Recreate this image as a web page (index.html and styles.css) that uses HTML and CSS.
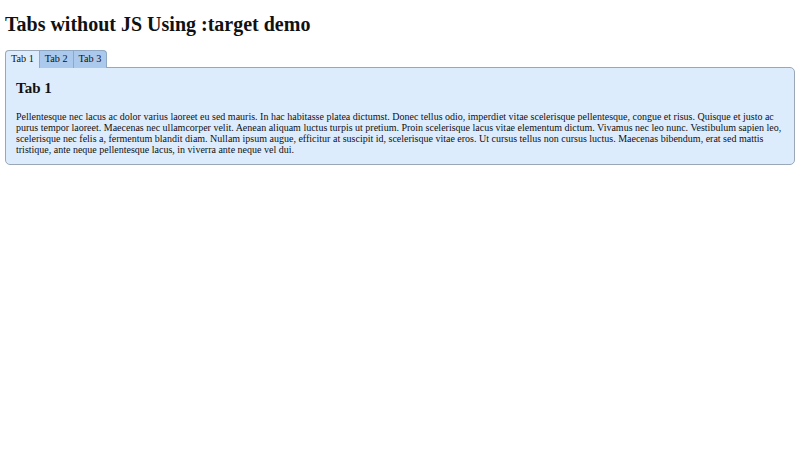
FILE: index.html
```html
<!DOCTYPE html>
<html>
<head>
<meta charset="utf-8">
<title>Tabs without JS</title>
<link rel="stylesheet" href="styles.css">
</head>
<body>
<h1 class="title">Tabs without JS Using :target demo</h1>
<div class="tabs">
  <div class="tab-list">
    <a class="tab active" href="#tab1">Tab 1</a>
    <a class="tab" href="#tab2">Tab 2</a>
    <a class="tab" href="#tab3">Tab 3</a>
  </div>
  <div class="panel">
    <h2 class="panel-title">Tab 1</h2>
    <p class="panel-text">Pellentesque nec lacus ac dolor varius laoreet eu sed mauris. In hac habitasse platea dictumst. Donec tellus odio, imperdiet vitae scelerisque pellentesque, congue et risus. Quisque et justo ac purus tempor laoreet. Maecenas nec ullamcorper velit. Aenean aliquam luctus turpis ut pretium. Proin scelerisque lacus vitae elementum dictum. Vivamus nec leo nunc. Vestibulum sapien leo, scelerisque nec felis a, fermentum blandit diam. Nullam ipsum augue, efficitur at suscipit id, scelerisque vitae eros. Ut cursus tellus non cursus luctus. Maecenas bibendum, erat sed mattis tristique, ante neque pellentesque lacus, in viverra ante neque vel dui.</p>
  </div>
</div>
</body>
</html>
```
FILE: styles.css
```css
html, body {
  margin: 0;
  padding: 0;
  background: #fff;
}
body {
  font-family: "Liberation Serif", "Times New Roman", serif;
  color: #111;
  padding: 11px 5px;
}
.title {
  margin: 0 0 12px 0;
  font-size: 20px;
  line-height: 27px;
  font-weight: bold;
}
.tabs {
  display: flex;
  flex-direction: column;
}
.tab-list {
  display: flex;
  position: relative;
  z-index: 1;
  margin-bottom: -1px;
}
.tab {
  display: block;
  font-size: 10.2px;
  line-height: 16px;
  padding: 0 5px;
  color: #111;
  text-decoration: none;
  background: #aac9ec;
  border: 1px solid #8fa8c4;
  border-bottom: none;
  border-left: none;
}
.tab:first-child {
  border-left: 1px solid #9aa7b6;
  border-top-left-radius: 4px;
}
.tab:last-child {
  border-top-right-radius: 4px;
}
.tab.active {
  background: #ddecfd;
  border-color: #9aa7b6;
  height: 17px;
}
.panel {
  background: #ddecfd;
  border: 1px solid #9aa7b6;
  border-radius: 0 5px 5px 5px;
  padding: 10px 10px 9px 10px;
}
.panel-title {
  margin: 0 0 13px 0;
  font-size: 15px;
  line-height: 20px;
  font-weight: bold;
}
.panel-text {
  margin: 0;
  font-size: 10px;
  line-height: 11px;
}
```
